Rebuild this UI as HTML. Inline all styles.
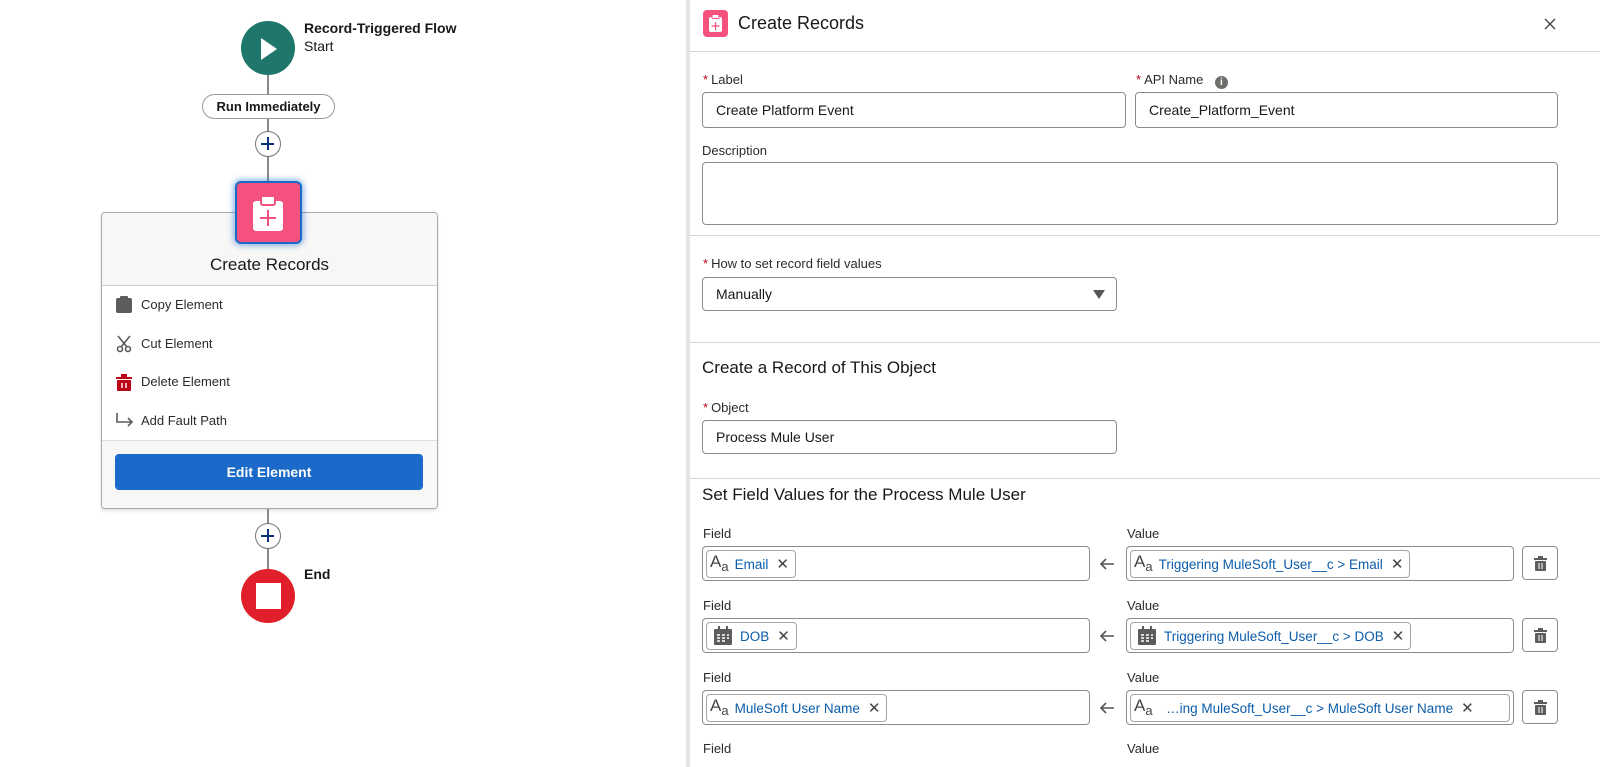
<!DOCTYPE html>
<html><head><meta charset="utf-8"><style>
*{box-sizing:border-box;margin:0;padding:0}
body{width:1600px;height:767px;overflow:hidden;background:#fff;font-family:"Liberation Sans",Arial,sans-serif;color:#181818;position:relative}
.a{position:absolute}
.line{position:absolute;width:2px;background:#8a8a8a;left:267px}
.plus{position:absolute;width:26px;height:26px;border:1.5px solid #747474;border-radius:50%;background:#fff;left:255px}
.plus:before,.plus:after{content:"";position:absolute;background:#0b2f7a}
.plus:before{left:5px;top:11px;width:13px;height:1.6px}
.plus:after{left:11px;top:5px;width:1.6px;height:13px}
.mi{position:absolute;left:141px;font-size:13px;color:#2b2b2b}
.lbl{position:absolute;font-size:13px;color:#2b2b2b}
.req{color:#ba0517;margin-right:3px}
.inp{position:absolute;border:1px solid #8b8b8b;border-radius:4px;background:#fff;font-size:14px;padding-left:13px;display:flex;align-items:center}
.hr{position:absolute;left:690px;right:0;height:1px;background:#d4d4d4}
.h2{position:absolute;left:702px;font-size:17px;color:#181818}
.chip{position:absolute;top:3px;left:3px;height:28px;border:1px solid #a5a5a5;border-radius:4px;display:flex;align-items:center;padding:0 6px 0 3px;font-size:13.5px;color:#0b5cab;white-space:nowrap}
.chip .x{color:#444;font-size:15px;margin-left:8px}
.aa{font-size:17px;color:#444;margin-right:6px;position:relative;top:-1px}
.aa sub{font-size:13px;vertical-align:-4px}
.trash{position:absolute;left:1522px;width:36px;height:34px;border:1px solid #8b8b8b;border-radius:4px;background:#fff}
.arrow{position:absolute;left:1099px;width:16px;height:14px}
</style></head><body>

<div class="a" style="left:241px;top:21px;width:54px;height:54px;border-radius:50%;background:#1f776b"></div>
<svg class="a" style="left:258px;top:36px" width="22" height="26"><path d="M3 2 L19 13 L3 24 Z" fill="#fff"/></svg>
<div class="a" style="left:304px;top:20px;font-size:14px;font-weight:bold">Record-Triggered Flow</div>
<div class="a" style="left:304px;top:38px;font-size:14px">Start</div>
<div class="line" style="top:75px;height:20px"></div>
<div class="a" style="left:202px;top:94px;width:133px;height:25px;border:1px solid #999;border-radius:13px;background:#fff;font-size:13px;font-weight:bold;text-align:center;line-height:23px">Run Immediately</div>
<div class="line" style="top:119px;height:12px"></div>
<div class="plus" style="top:131px"></div>
<div class="line" style="top:157px;height:26px"></div>

<div class="a" style="left:101px;top:212px;width:337px;height:297px;border:1px solid #a8a8a8;border-radius:4px;background:#fff;box-shadow:0 2px 3px rgba(0,0,0,.12);overflow:hidden">
  <div style="height:73px;background:#f7f7f6;border-bottom:1px solid #ccc"></div>
  <div style="position:absolute;top:227px;left:0;right:0;bottom:0;background:#f7f7f6;border-top:1px solid #ddd"></div>
</div>
<div class="a" style="left:235px;top:181px;width:67px;height:63px;border:2px solid #1b6ac9;border-radius:6px;background:#f4517e;box-shadow:0 0 6px 2px rgba(27,106,201,.45)"></div>
<svg class="a" style="left:251px;top:196px" width="34" height="36"><rect x="2" y="5" width="30" height="30" rx="3" fill="#fff"/><rect x="10" y="0" width="14" height="9" rx="2" fill="#fff" stroke="#f4517e" stroke-width="2"/><path d="M17 14v16M9 22h16" stroke="#f4517e" stroke-width="2"/></svg>
<div class="a" style="left:101px;width:337px;top:255px;text-align:center;font-size:17px">Create Records</div>

<svg class="a" style="left:116px;top:296px" width="16" height="17"><rect x="0" y="2" width="16" height="15" rx="2" fill="#5c5c5c"/><rect x="4" y="0" width="8" height="4" rx="1" fill="#5c5c5c"/></svg>
<div class="mi" style="top:297px">Copy Element</div>
<svg class="a" style="left:116px;top:335px" width="16" height="18" fill="none" stroke="#5c5c5c" stroke-width="1.6"><path d="M2 1 L11 12 M14 1 L5 12"/><circle cx="4" cy="14" r="2.5"/><circle cx="12" cy="14" r="2.5"/></svg>
<div class="mi" style="top:336px">Cut Element</div>
<svg class="a" style="left:116px;top:374px" width="16" height="17"><rect x="0" y="3" width="16" height="2" fill="#ba0517"/><rect x="5" y="0" width="6" height="3" fill="#ba0517"/><rect x="1" y="6" width="14" height="11" rx="1" fill="#ba0517"/><path d="M6 9v5M10 9v5" stroke="#fff" stroke-width="1.4"/></svg>
<div class="mi" style="top:374px">Delete Element</div>
<svg class="a" style="left:116px;top:412px" width="18" height="16" fill="none" stroke="#5c5c5c" stroke-width="1.6"><path d="M1 1v9h15M12 6l4 4-4 4"/></svg>
<div class="mi" style="top:413px">Add Fault Path</div>
<div class="a" style="left:115px;top:454px;width:308px;height:36px;background:#1b6ac9;border-radius:4px;color:#fff;font-size:14px;font-weight:bold;text-align:center;line-height:36px">Edit Element</div>

<div class="line" style="top:509px;height:14px"></div>
<div class="plus" style="top:523px"></div>
<div class="line" style="top:549px;height:20px"></div>
<div class="a" style="left:241px;top:569px;width:54px;height:54px;border-radius:50%;background:#e01e2c"></div>
<div class="a" style="left:256px;top:583px;width:25px;height:26px;background:#fff"></div>
<div class="a" style="left:304px;top:566px;font-size:14px;font-weight:bold">End</div>

<div class="a" style="left:686px;top:0;width:4px;height:767px;background:#e5e5e5"></div>
<div class="a" style="left:703px;top:10px;width:25px;height:27px;border-radius:4px;background:#f4517e"></div>
<svg class="a" style="left:708px;top:14px" width="15" height="19"><rect x="1" y="3" width="13" height="15" rx="2" fill="#fff"/><rect x="4" y="0.5" width="7" height="4" rx="1" fill="#fff" stroke="#f4517e"/><path d="M7.5 8v8M3.5 12h8" stroke="#f4517e" stroke-width="1.2"/></svg>
<div class="a" style="left:738px;top:13px;font-size:18px">Create Records</div>
<svg class="a" style="left:1544px;top:18px" width="12" height="12" stroke="#444" stroke-width="1.4"><path d="M1 1L11 11M11 1L1 11"/></svg>
<div class="hr" style="top:51px"></div>

<div class="lbl" style="left:703px;top:72px"><span class="req">*</span>Label</div>
<div class="inp" style="left:702px;top:92px;width:424px;height:36px">Create Platform Event</div>
<div class="lbl" style="left:1136px;top:72px"><span class="req">*</span>API Name <span style="display:inline-block;width:13px;height:13px;border-radius:50%;background:#706e6b;color:#fff;font-size:10px;font-weight:bold;text-align:center;line-height:13px;margin-left:8px;vertical-align:-1px">i</span></div>
<div class="inp" style="left:1135px;top:92px;width:423px;height:36px">Create_Platform_Event</div>
<div class="lbl" style="left:702px;top:143px">Description</div>
<div class="inp" style="left:702px;top:162px;width:856px;height:63px"></div>
<div class="hr" style="top:235px"></div>

<div class="lbl" style="left:703px;top:256px"><span class="req">*</span>How to set record field values</div>
<div class="inp" style="left:702px;top:277px;width:415px;height:34px">Manually<svg style="position:absolute;right:11px;top:12px" width="12" height="9"><path d="M0 0h12L6 9z" fill="#555"/></svg></div>
<div class="hr" style="top:342px"></div>
<div class="h2" style="top:358px">Create a Record of This Object</div>
<div class="lbl" style="left:703px;top:400px"><span class="req">*</span>Object</div>
<div class="inp" style="left:702px;top:420px;width:415px;height:34px">Process Mule User</div>
<div class="hr" style="top:478px"></div>
<div class="h2" style="top:485px">Set Field Values for the Process Mule User</div>

<div class="lbl" style="left:703px;top:526px">Field</div>
<div class="lbl" style="left:1127px;top:526px">Value</div>
<div class="inp" style="left:702px;top:546px;width:388px;height:35px;padding:0"><div class="chip"><span class="aa">A<sub>a</sub></span>Email<span class="x">✕</span></div></div>
<svg class="arrow" style="top:557px" stroke="#555" stroke-width="1.6" fill="none"><path d="M15 7H2M7 2L2 7l5 5"/></svg>
<div class="inp" style="left:1126px;top:546px;width:388px;height:35px;padding:0"><div class="chip"><span class="aa">A<sub>a</sub></span>Triggering MuleSoft_User__c &gt; Email<span class="x">✕</span></div></div>
<div class="trash" style="top:546px"><svg style="position:absolute;left:11px;top:9px" width="13" height="15"><rect x="0" y="2" width="13" height="2" fill="#5c5c5c"/><rect x="4" y="0" width="5" height="2" fill="#5c5c5c"/><rect x="1" y="5" width="11" height="10" rx="1" fill="#5c5c5c"/><path d="M5 7v6M8 7v6" stroke="#fff"/></svg></div>

<div class="lbl" style="left:703px;top:598px">Field</div>
<div class="lbl" style="left:1127px;top:598px">Value</div>
<div class="inp" style="left:702px;top:618px;width:388px;height:35px;padding:0"><div class="chip"><svg width="20" height="20" style="margin:0 7px 0 3px"><rect x="1" y="3" width="18" height="16" rx="1" fill="#5c5c5c"/><rect x="5" y="0" width="2" height="4" fill="#5c5c5c"/><rect x="13" y="0" width="2" height="4" fill="#5c5c5c"/><path d="M4 9h3M9 9h3M14 9h2M4 12h3M9 12h3M14 12h2M4 15h3M9 15h3" stroke="#fff" stroke-width="1.5"/></svg>DOB<span class="x">✕</span></div></div>
<svg class="arrow" style="top:629px" stroke="#555" stroke-width="1.6" fill="none"><path d="M15 7H2M7 2L2 7l5 5"/></svg>
<div class="inp" style="left:1126px;top:618px;width:388px;height:35px;padding:0"><div class="chip"><svg width="20" height="20" style="margin:0 7px 0 3px"><rect x="1" y="3" width="18" height="16" rx="1" fill="#5c5c5c"/><rect x="5" y="0" width="2" height="4" fill="#5c5c5c"/><rect x="13" y="0" width="2" height="4" fill="#5c5c5c"/><path d="M4 9h3M9 9h3M14 9h2M4 12h3M9 12h3M14 12h2M4 15h3M9 15h3" stroke="#fff" stroke-width="1.5"/></svg>Triggering MuleSoft_User__c &gt; DOB<span class="x">✕</span></div></div>
<div class="trash" style="top:618px"><svg style="position:absolute;left:11px;top:9px" width="13" height="15"><rect x="0" y="2" width="13" height="2" fill="#5c5c5c"/><rect x="4" y="0" width="5" height="2" fill="#5c5c5c"/><rect x="1" y="5" width="11" height="10" rx="1" fill="#5c5c5c"/><path d="M5 7v6M8 7v6" stroke="#fff"/></svg></div>

<div class="lbl" style="left:703px;top:670px">Field</div>
<div class="lbl" style="left:1127px;top:670px">Value</div>
<div class="inp" style="left:702px;top:690px;width:388px;height:35px;padding:0"><div class="chip"><span class="aa">A<sub>a</sub></span>MuleSoft User Name<span class="x">✕</span></div></div>
<svg class="arrow" style="top:701px" stroke="#555" stroke-width="1.6" fill="none"><path d="M15 7H2M7 2L2 7l5 5"/></svg>
<div class="inp" style="left:1126px;top:690px;width:388px;height:35px;padding:0"><div class="chip" style="right:3px"><span class="aa">A<sub>a</sub></span>&nbsp;&nbsp;…ing MuleSoft_User__c &gt; MuleSoft User Name<span class="x">✕</span></div></div>
<div class="trash" style="top:690px"><svg style="position:absolute;left:11px;top:9px" width="13" height="15"><rect x="0" y="2" width="13" height="2" fill="#5c5c5c"/><rect x="4" y="0" width="5" height="2" fill="#5c5c5c"/><rect x="1" y="5" width="11" height="10" rx="1" fill="#5c5c5c"/><path d="M5 7v6M8 7v6" stroke="#fff"/></svg></div>

<div class="lbl" style="left:703px;top:741px">Field</div>
<div class="lbl" style="left:1127px;top:741px">Value</div>
</body></html>
